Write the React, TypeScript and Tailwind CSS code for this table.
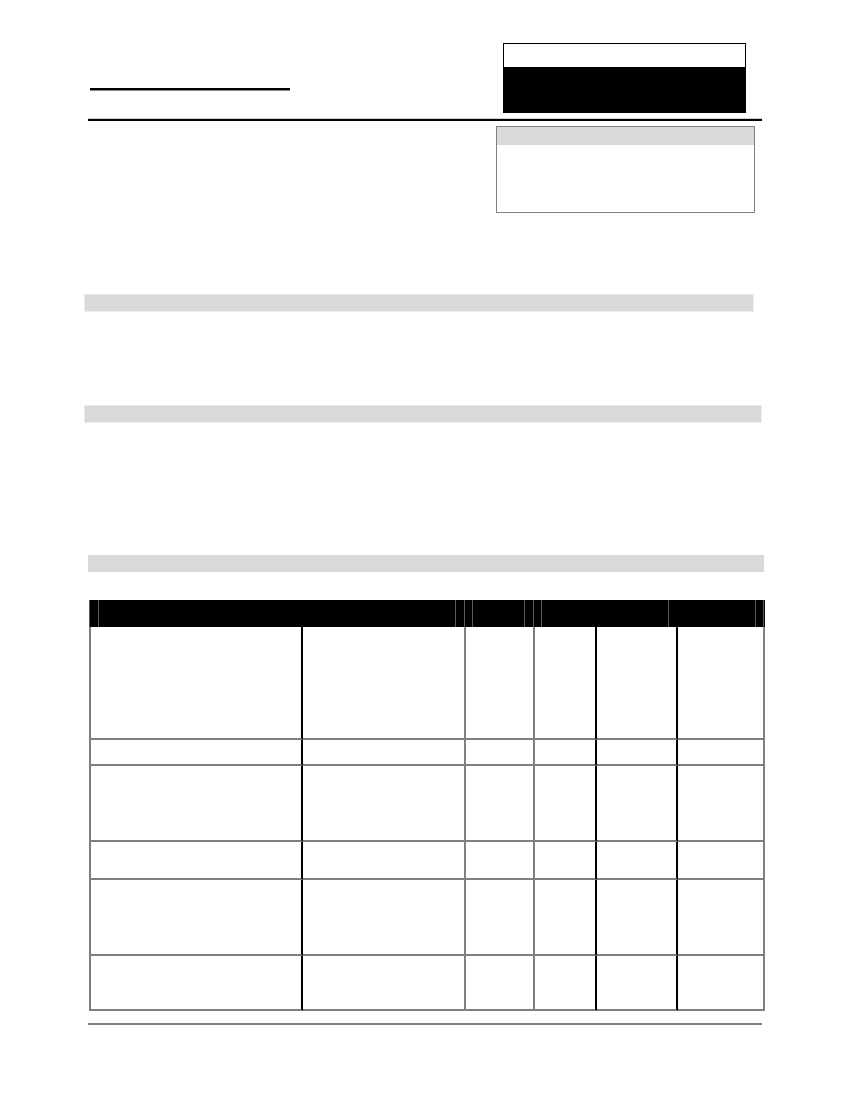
import React from "react";

// Column widths and right-edge colours for the table body
const cols = [
	{ w: "w-[212px]", line: "border-r-2 border-r-black" },
	{ w: "w-[163px]", line: "border-r-2 border-r-[#7f7f7f]" },
	{ w: "w-[69px]", line: "border-r-2 border-r-[#7f7f7f]" },
	{ w: "w-[62px]", line: "border-r-2 border-r-black" },
	{ w: "w-[81px]", line: "border-r-2 border-r-black" },
	{ w: "w-[87px]", line: "border-r-2 border-r-[#7f7f7f]" },
];

const rows = ["h-[113px]", "h-[26px]", "h-[76px]", "h-[38px]", "h-[76px]", "h-[55px]"];

// thin grey rules inside the black header band
const headSegs = [
	"w-[1px]",
	"w-[9px]",
	"w-[357px]",
	"w-[9px]",
	"w-[8px]",
	"w-[52px]",
	"w-[9px]",
	"w-[8px]",
	"w-[127px]",
	"w-[87px]",
	"w-[8px]",
];

export default function App() {
	return (
		<div className="w-[850px] min-h-[1100px] bg-white font-['Liberation_Sans',sans-serif]">
			{/* Header */}
			<div className="flex items-start justify-between pl-[90px] pr-[104px] pt-[43px]">
				<div className="mt-[45px] w-[200px]">
					<div className="h-[2px] bg-black" />
					<div className="h-[1px] bg-[#8a8a8a]" />
				</div>
				<div className="w-[243px] h-[70px] border border-black flex flex-col">
					<div className="h-[23px] bg-white" />
					<div className="flex-1 bg-black" />
				</div>
			</div>

			{/* Rule */}
			<div className="ml-[88px] mt-[5px] w-[674px]">
				<div className="h-[1px] bg-[#d0d0d0]" />
				<div className="h-[2px] bg-black" />
			</div>

			{/* Info box */}
			<div className="ml-[496px] mt-[5px] w-[259px] h-[87px] border border-[#808080]">
				<div className="h-[18px] bg-[#d9d9d9]" />
			</div>

			{/* Section bars */}
			<div className="ml-[84px] mt-[81px] w-[670px] h-[18px] bg-[#d9d9d9] border border-[#ececec]" />
			<div className="ml-[84px] mt-[93px] w-[678px] h-[18px] bg-[#d9d9d9] border border-[#ececec]" />
			<div className="ml-[88px] mt-[132px] w-[676px] h-[17px] bg-[#d9d9d9]" />

			{/* Table */}
			<div className="ml-[89px] mt-[28px] w-[678px]">
				<div className="flex h-[27px] w-[676px] bg-black">
					{headSegs.map((w, i) => (
						<div key={i} className={`${w} h-full border-r border-r-[#5c5c5c]`} />
					))}
				</div>
				<div className="border-l-2 border-l-[#7f7f7f] w-[676px]">
					{rows.map((h, r) => (
						<div key={r} className={`flex ${h}`}>
							{cols.map((c, i) => (
								<div key={i} className={`${c.w} shrink-0 h-full ${c.line} border-b-2 border-b-[#7f7f7f]`} />
							))}
						</div>
					))}
				</div>
			</div>

			{/* Footer rule */}
			<div className="ml-[88px] mt-[12px] w-[674px] h-[2px] bg-[#7f7f7f]" />
		</div>
	);
}
